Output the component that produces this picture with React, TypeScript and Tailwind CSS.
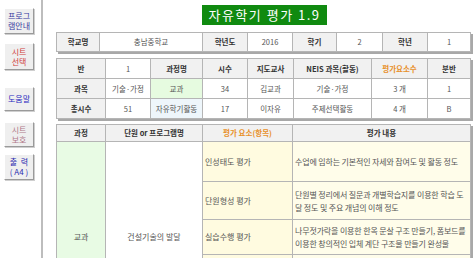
import React from 'react';

const font = { fontFamily: '"Noto Sans CJK KR", "Noto Sans", sans-serif' };

type SideBtn = { lines: string[]; color: string; h: string };

const sideButtons: SideBtn[] = [
  { lines: ['프로그', '램안내'], color: 'text-[#3a3aa0]', h: 'h-[26px] mt-[8px]' },
  { lines: ['시트', '선택'], color: 'text-[#d04040]', h: 'h-[27px] mt-[9px]' },
  { lines: ['도움말'], color: 'text-[#2a2ac0]', h: 'h-[24px] mt-[17px]' },
  { lines: ['시트', '보호'], color: 'text-[#b07888]', h: 'h-[25px] mt-[11px]' },
  { lines: ['출  력', '( A4 )'], color: 'text-[#2a2ab0]', h: 'h-[26px] mt-[7px]' },
];

const th = 'bg-[#f1f1f1] border border-[#b5b5b5] font-bold text-[#333] text-[7.5px] text-center';
const td = 'border border-[#b5b5b5] text-[#555] text-[7.5px] text-center';
const item = 'border border-[#b5b5b5] text-[#555] text-[8px] bg-[#fffbe0] text-left pl-[2px]';
const desc = 'border border-[#b5b5b5] text-[#555] text-[8px] bg-[#fffdea] text-left pl-[2px] pr-0 leading-[13px] tracking-[-0.15px]';

export default function App() {
  return (
    <div className="flex h-[258px] w-[474px] overflow-hidden bg-white" style={font}>
      {/* side menu */}
      <div className="w-[43px] shrink-0 border-r-2 border-[#bdbdbd] flex flex-col pl-[4px]">
        {sideButtons.map((b, i) => (
          <div
            key={i}
            className={`${b.h} w-[30px] bg-[#efefef] border border-t-white border-l-white border-r-[#9a9a9a] border-b-[#9a9a9a] shadow-[1px_1px_0_#cfcfcf] flex flex-col items-center justify-center leading-[10px] text-[8px] whitespace-pre ${b.color}`}
          >
            {b.lines.map((l) => (
              <span key={l}>{l}</span>
            ))}
          </div>
        ))}
      </div>

      {/* main */}
      <div className="flex flex-col pl-[13px]">
        <div className="ml-[146px] mt-[5px] h-[20px] w-[125px] bg-[#108a10] text-white text-[13px] leading-[20px] text-center tracking-[1.5px]">
          자유학기 평가 1.9
        </div>

        {/* school info */}
        <table className="mt-[7px] w-[414px] table-fixed border-collapse border border-[#6a6a6a] shadow-[2px_2px_0_#a8a8a8]">
          <colgroup>
            <col className="w-[43px]" />
            <col className="w-[103px]" />
            <col className="w-[45px]" />
            <col className="w-[45px]" />
            <col className="w-[44px]" />
            <col className="w-[46px]" />
            <col className="w-[45px]" />
            <col className="w-[43px]" />
          </colgroup>
          <tbody>
            <tr className="h-[19px]">
              <td className={th}>학교명</td>
              <td className={td}>충남중학교</td>
              <td className={th}>학년도</td>
              <td className={td}>2016</td>
              <td className={th}>학기</td>
              <td className={td}>2</td>
              <td className={th}>학년</td>
              <td className={td}>1</td>
            </tr>
          </tbody>
        </table>

        {/* class info */}
        <table className="mt-[6px] w-[414px] table-fixed border-collapse border border-[#6a6a6a] shadow-[2px_2px_0_#a8a8a8]">
          <colgroup>
            <col className="w-[49px]" />
            <col className="w-[45px]" />
            <col className="w-[52px]" />
            <col className="w-[45px]" />
            <col className="w-[46px]" />
            <col className="w-[78px]" />
            <col className="w-[56px]" />
            <col className="w-[43px]" />
          </colgroup>
          <tbody>
            <tr className="h-[20px]">
              <td className={th}>반</td>
              <td className={td}>1</td>
              <td className={th}>과정명</td>
              <td className={th}>시수</td>
              <td className={th}>지도교사</td>
              <td className={th}>NEIS 과목(활동)</td>
              <td className={`${th} !text-[#e8902a]`}>평가요소수</td>
              <td className={th}>분반</td>
            </tr>
            <tr className="h-[20px]">
              <td className={th}>과목</td>
              <td className={td}>기술·가정</td>
              <td className={`${td} bg-[#e6fbe0]`}>교과</td>
              <td className={td}>34</td>
              <td className={td}>김교과</td>
              <td className={td}>기술·가정</td>
              <td className={td}>3 개</td>
              <td className={td}>1</td>
            </tr>
            <tr className="h-[20px]">
              <td className={th}>총시수</td>
              <td className={td}>51</td>
              <td className={`${td} bg-[#eef6fb]`}>자유학기활동</td>
              <td className={td}>17</td>
              <td className={td}>이자유</td>
              <td className={td}>주제선택활동</td>
              <td className={td}>4 개</td>
              <td className={td}>B</td>
            </tr>
          </tbody>
        </table>

        {/* evaluation */}
        <table className="mt-[5px] w-[414px] table-fixed border-collapse border border-[#6a6a6a] shadow-[2px_2px_0_#a8a8a8]">
          <colgroup>
            <col className="w-[49px]" />
            <col className="w-[97px]" />
            <col className="w-[90px]" />
            <col className="w-[178px]" />
          </colgroup>
          <tbody>
            <tr className="h-[17px]">
              <td className={th}>과정</td>
              <td className={th}>단원 or 프로그램명</td>
              <td className={`${th} !text-[#e8902a]`}>평가 요소(항목)</td>
              <td className={th}>평가 내용</td>
            </tr>
            <tr className="h-[40px]">
              <td rowSpan={5} className={`${td} !text-[8px] bg-[#e8fbe4]`}>교과</td>
              <td rowSpan={5} className={`${td} !text-[8px]`}>건설기술의 발달</td>
              <td className={item}>인성태도 평가</td>
              <td className={desc}>수업에 임하는 기본적인 자세와 참여도 및 활동 정도</td>
            </tr>
            <tr className="h-[38px]">
              <td className={item}>단원형성 평가</td>
              <td className={desc}>
                단원별 정리에서 질문과 개별학습지를 이용한 학습 도달 정도 및 주요 개념의 이해 정도
              </td>
            </tr>
            <tr className="h-[35px]">
              <td className={item}>실습수행 평가</td>
              <td className={desc}>
                나무젓가락을 이용한 한옥 문살 구조 만들기, 폼보드를 이용한 창의적인 입체 계단 구조물 만들기 완성물
              </td>
            </tr>
            <tr className="h-[38px]">
              <td className={item}></td>
              <td className={desc}></td>
            </tr>
            <tr className="h-[40px]">
              <td className={item}></td>
              <td className={desc}></td>
            </tr>
          </tbody>
        </table>
      </div>
    </div>
  );
}
